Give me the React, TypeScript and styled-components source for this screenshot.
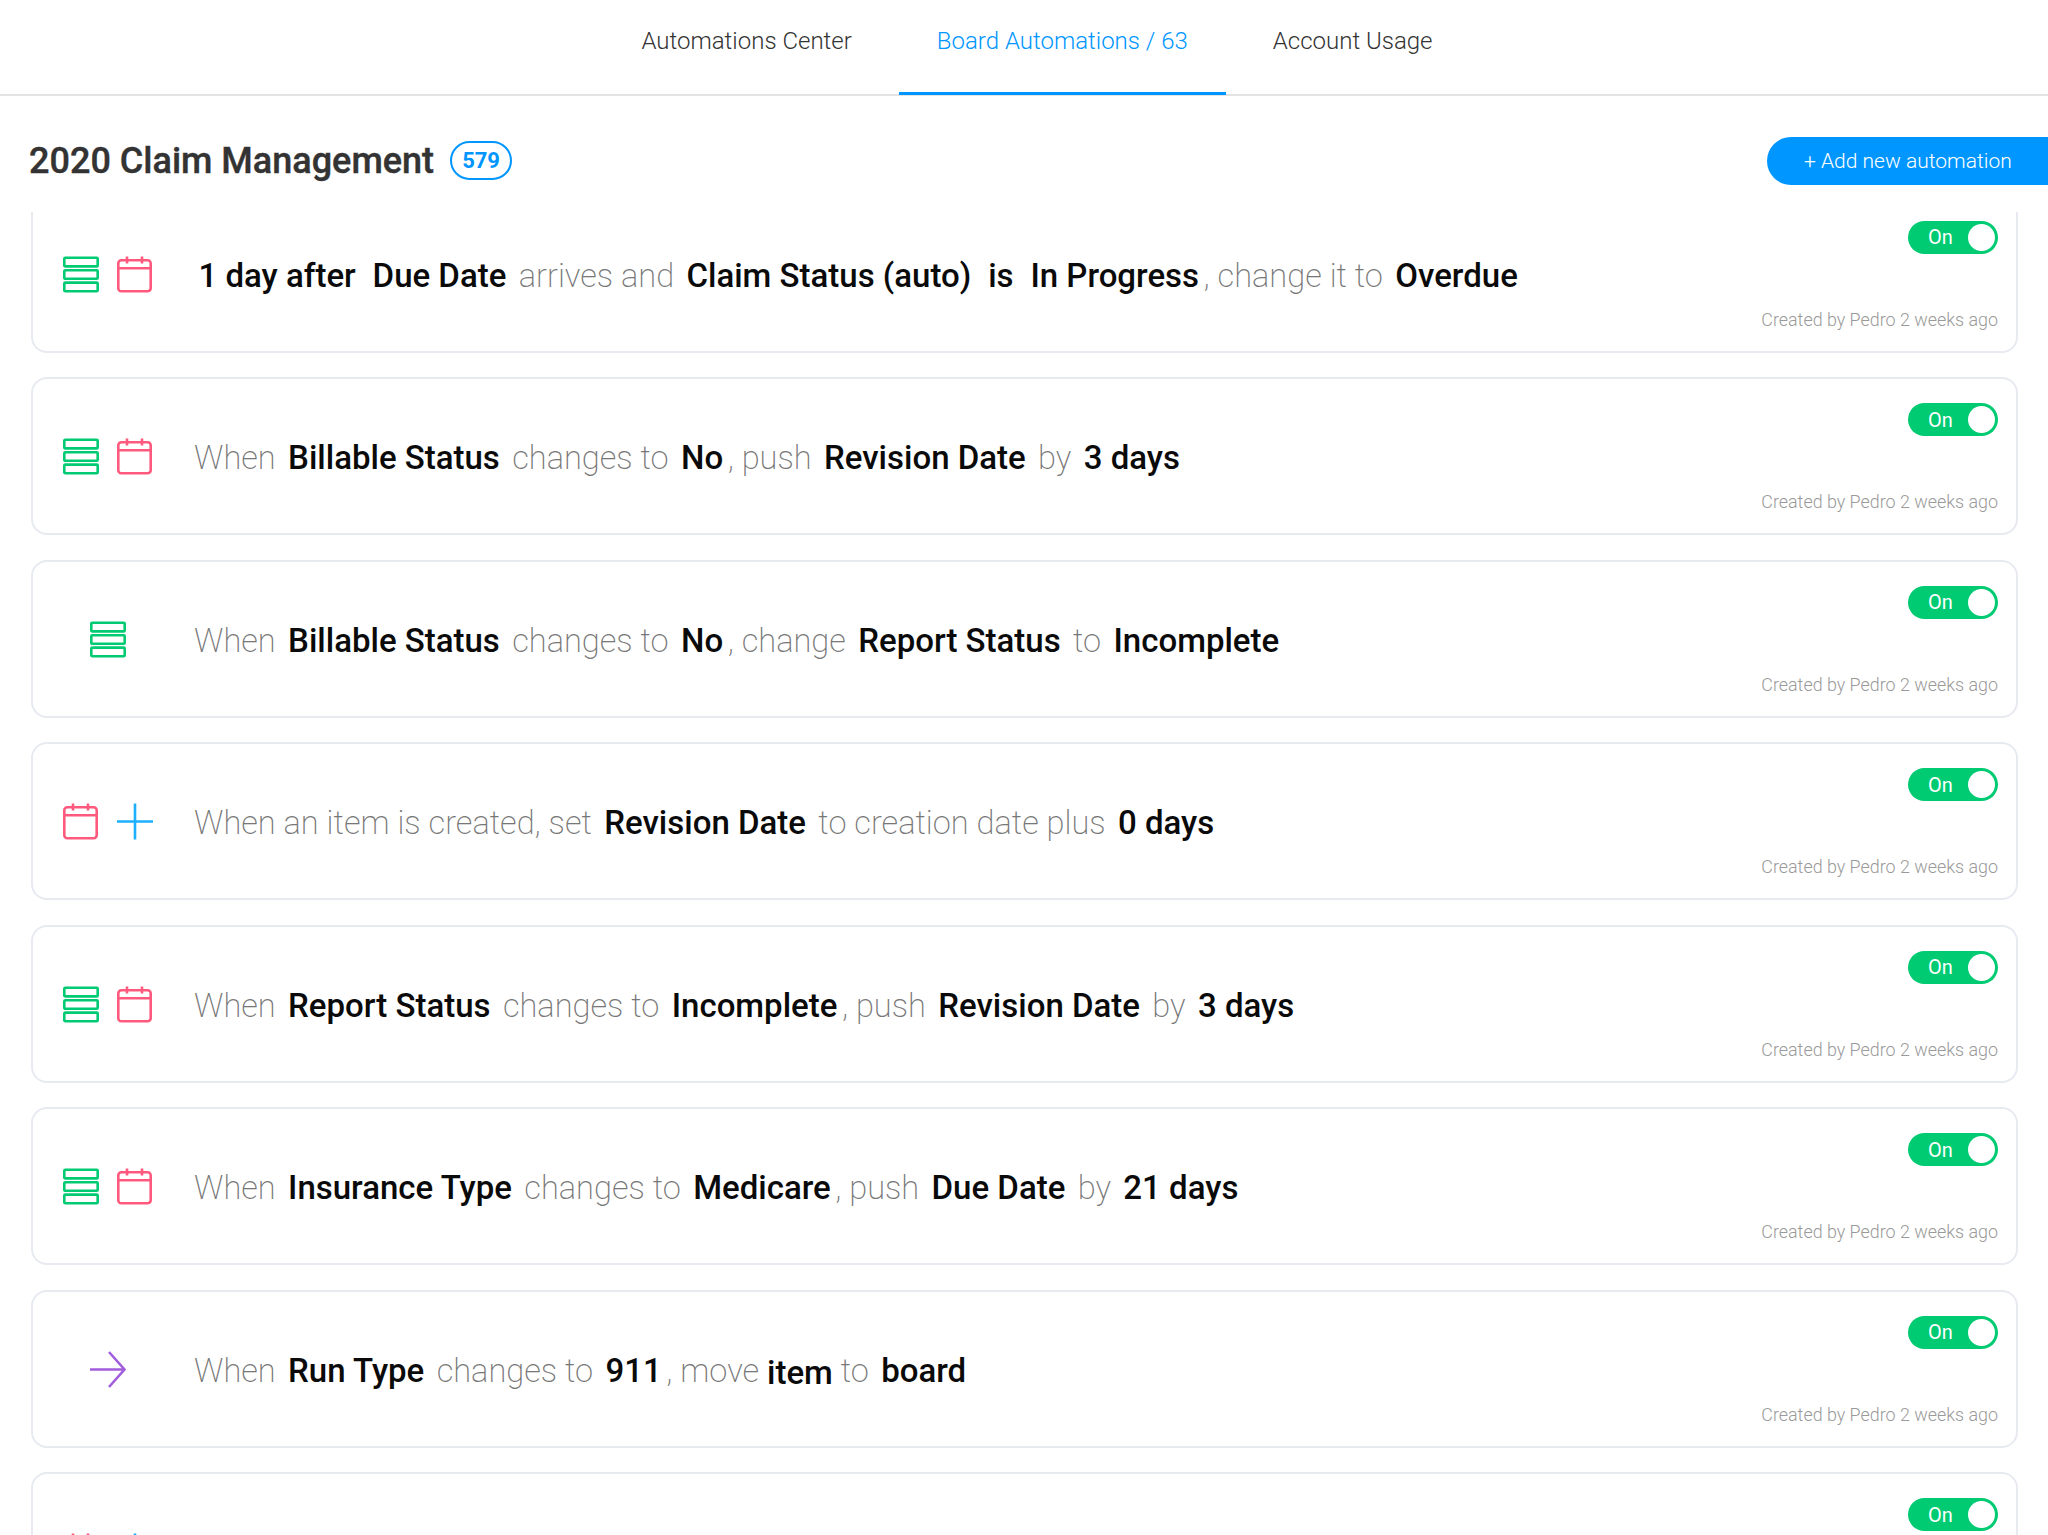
import React from "react";
import styled, { createGlobalStyle } from "styled-components";

const GlobalStyle = createGlobalStyle`
  html, body {
    margin: 0;
    padding: 0;
    background: #fff;
    font-family: Roboto, "Liberation Sans", sans-serif;
  }
`;

const Page = styled.div`
  height: 1535px;
  overflow: hidden;
  display: flex;
  flex-direction: column;
  background: #fff;
`;

const Tabs = styled.nav`
  height: 94px;
  flex: none;
  display: flex;
  justify-content: center;
  border-bottom: 2px solid #e3e3e3;
  padding-left: 26px;
  gap: 9px;
`;

const Tab = styled.div<{ $active?: boolean }>`
  height: 95px;
  box-sizing: border-box;
  padding: 0 38px;
  line-height: 82px;
  font-size: 24px;
  font-weight: 300;
  color: ${(p) => (p.$active ? "#0096ff" : "#333")};
  border-bottom: 3px solid ${(p) => (p.$active ? "#0096ff" : "transparent")};
`;

const Header = styled.header`
  height: 116px;
  flex: none;
  display: flex;
  align-items: center;
  justify-content: space-between;
  padding: 13px 0 0 29px;
  box-sizing: border-box;
`;

const TitleGroup = styled.div`
  display: flex;
  align-items: center;
  gap: 16px;
`;

const Title = styled.h1`
  margin: 0;
  font-size: 36px;
  font-weight: 500;
  color: #333;
  -webkit-text-stroke: 0.4px #333;
`;

const Count = styled.span`
  width: 62px;
  height: 39px;
  box-sizing: border-box;
  border: 2px solid #0096ff;
  border-radius: 20px;
  color: #0096ff;
  font-size: 22px;
  font-weight: 700;
  display: flex;
  align-items: center;
  justify-content: center;
`;

const AddButton = styled.button`
  width: 281px;
  height: 48px;
  border: 0;
  padding: 0 0 0 37px;
  border-radius: 24px 0 0 24px;
  background: #0096ff;
  color: #fff;
  font-family: inherit;
  font-size: 21px;
  font-weight: 300;
  text-align: left;
`;

const List = styled.div`
  flex: 1;
  min-height: 0;
  overflow: hidden;
  padding: 0 30px 0 31px;
`;

const Cards = styled.div`
  display: flex;
  flex-direction: column;
  gap: 24.5px;
  margin-top: -17.5px;
`;

const Card = styled.article`
  flex: none;
  height: 158px;
  box-sizing: border-box;
  display: flex;
  align-items: center;
  border: 2px solid #e8eaf2;
  border-radius: 16px;
  padding: 1px 0 0 30px;
`;

const Icons = styled.div`
  flex: none;
  width: 90px;
  display: flex;
  justify-content: center;
  gap: 18px;
`;

const Sentence = styled.p`
  flex: 1;
  margin: 2px 0 0 41px;
  font-size: 32.6px;
  font-weight: 200;
  color: #777;
  white-space: pre;
`;

const Strong = styled.b<{ $lifted?: boolean }>`
  font-size: 33px;
  font-weight: 500;
  color: #0a0a0a;
  margin: 0 ${(p) => (p.$lifted ? "0" : "4.5px")};
  position: relative;
  top: ${(p) => (p.$lifted ? "2px" : "0")};
`;

const Side = styled.div`
  align-self: stretch;
  flex: none;
  display: flex;
  flex-direction: column;
  align-items: flex-end;
  justify-content: space-between;
  padding: 23px 18px 21px 0;
`;

const Toggle = styled.div`
  width: 90px;
  height: 33px;
  box-sizing: border-box;
  border-radius: 17px;
  background: #00ca72;
  color: #fff;
  font-size: 20px;
  display: flex;
  align-items: center;
  justify-content: space-between;
  padding: 0 3px 0 20px;
`;

const Knob = styled.span`
  width: 27px;
  height: 27px;
  border-radius: 50%;
  background: #fff;
`;

const Meta = styled.span`
  font-size: 17.9px;
  font-weight: 300;
  color: #9a9a9a;
`;

const Glyph = styled.svg`
  display: block;
  width: 36px;
  height: 37px;
  fill: none;
  stroke-width: 2.6;
`;

const TableIcon = () => (
  <Glyph viewBox="0 0 36 37" stroke="#00ca72">
    <rect x="1.3" y="1.8" width="33.4" height="8.6" rx="1" />
    <rect x="1.3" y="14.2" width="33.4" height="8.6" rx="1" />
    <rect x="1.3" y="26.6" width="33.4" height="8.6" rx="1" />
  </Glyph>
);

const CalendarIcon = () => (
  <Glyph viewBox="0 0 36 37" stroke="#ff5a7e">
    <rect x="1.3" y="4.300" width="32.4" height="31" rx="3" />
    <path d="M1.3 12.3h32.4M10 0.5v7M25 0.5v7" />
  </Glyph>
);

const PlusIcon = () => (
  <Glyph viewBox="0 0 36 37" stroke="#1cb0ff">
    <path d="M18 .5v36M0 18.5h36" />
  </Glyph>
);

const ArrowIcon = () => (
  <Glyph viewBox="0 0 36 37" stroke="#a25ddc">
    <path d="M0 18.5h34M19 1l15.500 17.500L19 36" />
  </Glyph>
);

const icons = {
  table: TableIcon,
  calendar: CalendarIcon,
  plus: PlusIcon,
  arrow: ArrowIcon,
};

type Part = string | { b: string; lifted?: boolean };

const rows: { icons: (keyof typeof icons)[]; parts: Part[]; offscreen?: boolean }[] = [
  {
    icons: ["table", "calendar"],
    parts: [
      { b: "1 day after" }, " ", { b: "Due Date" }, " arrives and ",
      { b: "Claim Status (auto)" }, " ", { b: "is" }, " ", { b: "In Progress" },
      ", change it to ", { b: "Overdue" },
    ],
  },
  {
    icons: ["table", "calendar"],
    parts: [
      "When ", { b: "Billable Status" }, " changes to ", { b: "No" }, ", push ",
      { b: "Revision Date" }, " by ", { b: "3 days" },
    ],
  },
  {
    icons: ["table"],
    parts: [
      "When ", { b: "Billable Status" }, " changes to ", { b: "No" }, ", change ",
      { b: "Report Status" }, " to ", { b: "Incomplete" },
    ],
  },
  {
    icons: ["calendar", "plus"],
    parts: [
      "When an item is created, set ", { b: "Revision Date" },
      " to creation date plus ", { b: "0 days" },
    ],
  },
  {
    icons: ["table", "calendar"],
    parts: [
      "When ", { b: "Report Status" }, " changes to ", { b: "Incomplete" }, ", push ",
      { b: "Revision Date" }, " by ", { b: "3 days" },
    ],
  },
  {
    icons: ["table", "calendar"],
    parts: [
      "When ", { b: "Insurance Type" }, " changes to ", { b: "Medicare" }, ", push ",
      { b: "Due Date" }, " by ", { b: "21 days" },
    ],
  },
  {
    icons: ["arrow"],
    parts: [
      "When ", { b: "Run Type" }, " changes to ", { b: "911" }, ", move ",
      { b: "item", lifted: true }, " to ", { b: "board" },
    ],
  },
  { icons: ["calendar", "plus"], parts: [], offscreen: true },
];

const App = () => (
  <Page>
    <GlobalStyle />
    <Tabs>
      <Tab>Automations Center</Tab>
      <Tab $active>Board Automations / 63</Tab>
      <Tab>Account Usage</Tab>
    </Tabs>
    <Header>
      <TitleGroup>
        <Title>2020 Claim Management</Title>
        <Count>579</Count>
      </TitleGroup>
      <AddButton>+ Add new automation</AddButton>
    </Header>
    <List>
      <Cards>
        {rows.map((row, i) => (
          <Card key={i}>
            <Icons>
              {row.icons.map((name) => {
                const Icon = icons[name];
                return <Icon key={name} />;
              })}
            </Icons>
            <Sentence>
              {row.parts.map((part, j) =>
                typeof part === "string" ? (
                  part
                ) : (
                  <Strong key={j} $lifted={part.lifted}>
                    {part.b}
                  </Strong>
                )
              )}
            </Sentence>
            <Side>
              <Toggle>
                On
                <Knob />
              </Toggle>
              {!row.offscreen && <Meta>Created by Pedro 2 weeks ago</Meta>}
            </Side>
          </Card>
        ))}
      </Cards>
    </List>
  </Page>
);

export default App;
